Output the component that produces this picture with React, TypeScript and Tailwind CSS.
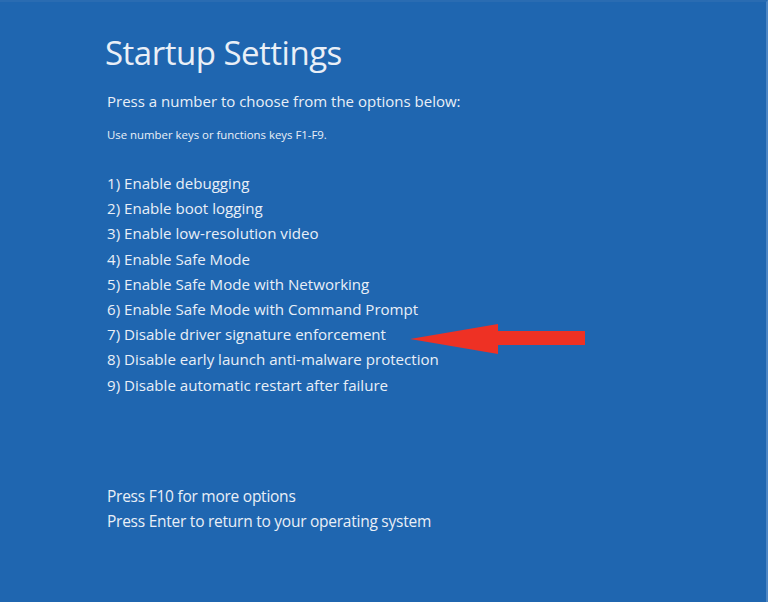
import React from 'react';

const options = [
    '1) Enable debugging',
    '2) Enable boot logging',
    '3) Enable low-resolution video',
    '4) Enable Safe Mode',
    '5) Enable Safe Mode with Networking',
    '6) Enable Safe Mode with Command Prompt',
    '7) Disable driver signature enforcement',
    '8) Disable early launch anti-malware protection',
    '9) Disable automatic restart after failure',
];

const Arrow: React.FC = () => (
    <svg width="176" height="32" viewBox="0 0 176 32" className="absolute left-[410px] top-[321px]">
        <polygon points="0,16 88,1 88,8 175,8 175,22 88,22 88,31" fill="#ee3124" />
    </svg>
);

const App: React.FC = () => {
    return (
        <div className="relative w-[768px] h-[602px] overflow-hidden bg-[#1f66b0] text-[#e9eff7] font-['Open_Sans',sans-serif] border-t-2 border-[#2a6cb2] border-r-2 border-r-[#4c86c4]">
            <div className="flex flex-col pl-[105px] pt-[28px]">
                <h1 className="text-[33px] leading-[46px] font-normal tracking-[-0.5px]">Startup Settings</h1>
                <p className="pl-[2px] mt-[14px] text-[15px] leading-[22px]">Press a number to choose from the options below:</p>
                <p className="pl-[2px] mt-[15px] text-[11.4px] leading-[16px]">Use number keys or functions keys F1-F9.</p>
                <ul className="pl-[2px] mt-[28px] flex flex-col">
                    {options.map(o => (
                        <li key={o} className="text-[15.1px] leading-[25.2px]">{o}</li>
                    ))}
                </ul>
                <div className="pl-[2px] mt-[86px] flex flex-col">
                    <p className="text-[15.5px] leading-[25.2px] tracking-[-0.25px]">Press F10 for more options</p>
                    <p className="text-[15.5px] leading-[25.2px] tracking-[-0.25px]">Press Enter to return to your operating system</p>
                </div>
            </div>
            <Arrow />
        </div>
    );
};

export default App;
